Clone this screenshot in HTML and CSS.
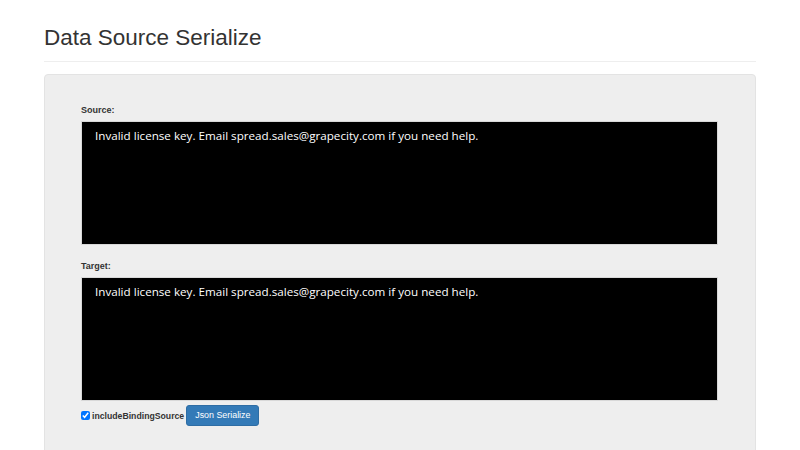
FILE: index.html
```html
<!DOCTYPE html>
<html>
<head>
<meta charset="utf-8">
<title>Data Source Serialize</title>
<link rel="stylesheet" href="styles.css">
</head>
<body>
<div class="container">
  <div class="page-header">
    <h1>Data Source Serialize</h1>
  </div>
  <div class="well">
    <div class="group">
      <label class="field-label">Source:</label>
      <div class="sheet"><span class="sheet-msg">Invalid license key. Email spread.sales@grapecity.com if you need help.</span></div>
    </div>
    <div class="group">
      <label class="field-label">Target:</label>
      <div class="sheet"><span class="sheet-msg">Invalid license key. Email spread.sales@grapecity.com if you need help.</span></div>
    </div>
    <div class="actions">
      <label class="check"><input type="checkbox" checked class="check-box"><span class="check-text">includeBindingSource</span></label>
      <button class="btn">Json Serialize</button>
    </div>
  </div>
</div>
</body>
</html>
```
FILE: styles.css
```css
html, body {
  margin: 0;
  padding: 0;
  background: #fff;
  font-family: "Liberation Sans", Arial, sans-serif;
  color: #333;
}
.container {
  width: 712px;
  margin: 0 auto;
}
.page-header {
  padding: 25px 0 11px;
  border-bottom: 1px solid #eee;
}
.page-header h1 {
  margin: 0;
  font-size: 22.5px;
  line-height: 25px;
  font-weight: 400;
  color: #333;
}
.well {
  margin-top: 12px;
  background: #eee;
  border: 1px solid #e3e3e3;
  border-radius: 4px;
  padding: 30px 37px 40px 36px;
  min-height: 400px;
}
.group {
  margin-bottom: 16px;
}
.field-label {
  display: block;
  font-size: 9px;
  line-height: 11px;
  font-weight: 700;
  color: #333;
  margin-bottom: 5px;
}
.sheet {
  box-sizing: border-box;
  height: 124px;
  background: #000;
  border: 1px solid #d8d8d8;
  padding: 6px 13px 0;
}
.sheet-msg {
  display: block;
  font-family: "Open Sans", "Noto Sans", sans-serif;
  font-size: 11.65px;
  line-height: 16px;
  color: #fff;
}
.group:nth-child(2) {
  margin-bottom: 4px;
}
.actions {
  display: flex;
  align-items: center;
}
.check {
  display: flex;
  align-items: center;
  font-size: 8.7px;
  font-weight: 700;
  color: #333;
}
.check-box {
  width: 9px;
  height: 9px;
  margin: 0 2px 0 0;
}
.btn {
  margin-left: 2px;
  height: 21px;
  padding: 0 8px;
  background: #337ab7;
  border: 1px solid #2e6da4;
  border-radius: 3px;
  color: #fff;
  font-family: "Liberation Sans", Arial, sans-serif;
  font-size: 8.9px;
  line-height: 19px;
}
```
